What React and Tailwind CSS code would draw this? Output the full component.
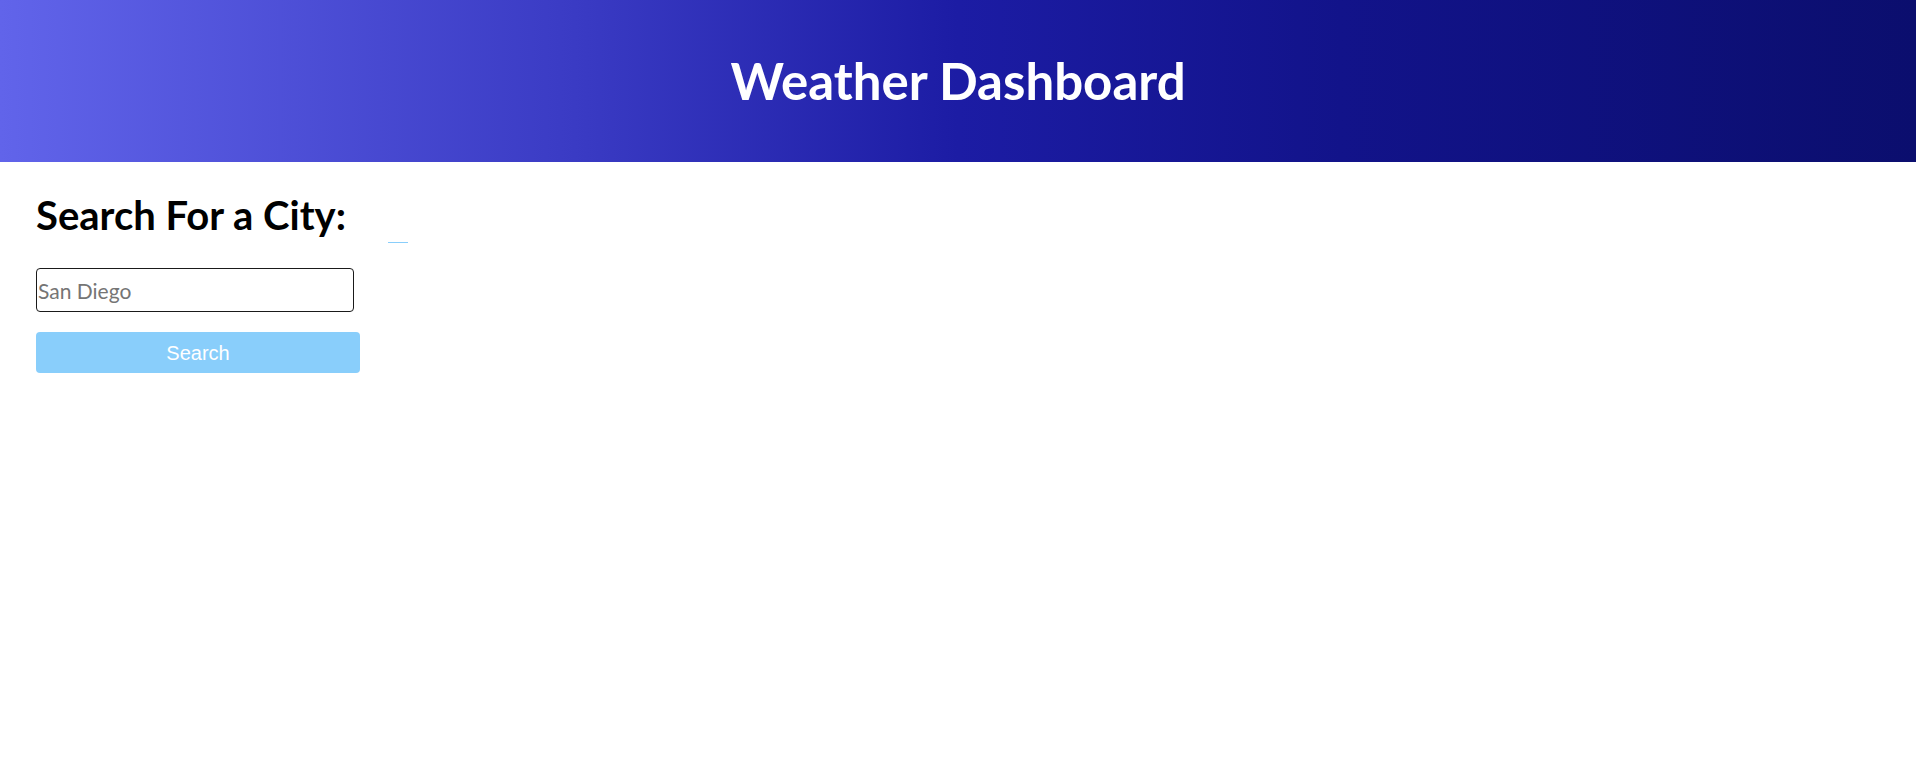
export default function App() {
  return (
    <div className="min-h-screen bg-white" style={{ fontFamily: '"Lato", "Open Sans", sans-serif' }}>
      <header className="flex h-[162px] items-center justify-center bg-[linear-gradient(90deg,#6164ea_0%,#3a3bc4_30%,#1c1ca4_50%,#12138a_70%,#0b0e6e_100%)]">
        <h1 className="text-[51px] font-bold text-white">Weather Dashboard</h1>
      </header>
      <main className="flex px-[36px]">
        <section className="flex w-[324px] flex-col">
          <h2 className="mt-[30px] text-[40px] font-bold leading-[46px] text-black">Search For a City:</h2>
          <input
            type="text"
            placeholder="San Diego"
            className="mt-[30px] h-[44px] w-[318px] rounded-[4px] border border-[#1a1a1a] px-[1px] text-[21px] placeholder:text-[#757575]"
          />
          <button
            type="button"
            className="mt-[20px] h-[41px] w-[324px] rounded-[4px] bg-[#89cefb] text-[20px] text-white"
            style={{ fontFamily: '"Liberation Sans", Arial, sans-serif' }}
          >
            Search
          </button>
        </section>
        <ul className="ml-[28px] mt-[80px] h-0 w-[20px] border-t border-[#89cefb]" />
      </main>
    </div>
  );
}
